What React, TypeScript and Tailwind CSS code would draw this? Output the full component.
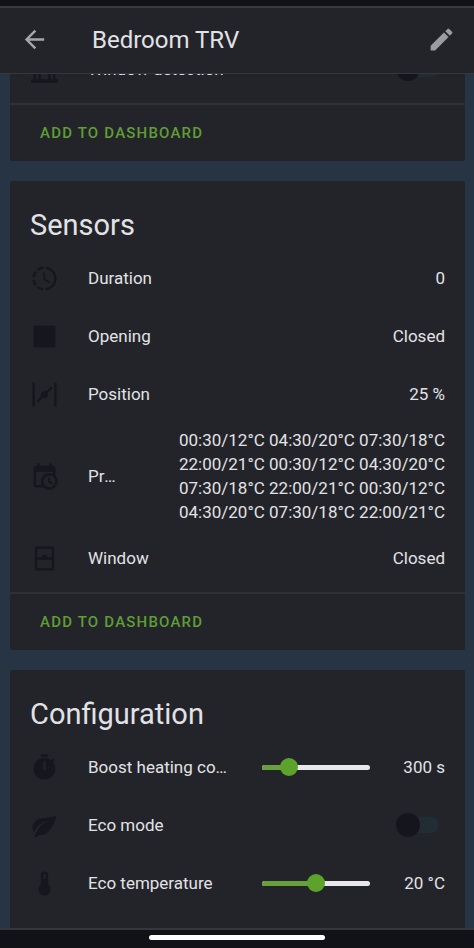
import React, { ReactNode, useState } from "react";
import { MdArrowBack, MdEdit } from "react-icons/md";

const icons = {
  windowOpen: "M21 20V2H3V20H1V23H23V20M19 4V11H17V4M5 4H7V11H5M5 20V13H7V20M9 20V4H15V20M17 20V13H19V20Z",
  progressClock: "M13,2.03V2.05L13,4.05C17.39,4.59 20.5,8.58 19.96,12.97C19.5,16.61 16.64,19.5 13,19.93V21.93C18.5,21.38 22.5,16.5 21.95,11C21.5,6.25 17.73,2.5 13,2.03M11,2.06C9.05,2.25 7.19,3 5.67,4.26L7.1,5.74C8.22,4.84 9.57,4.26 11,4.06V2.06M4.26,5.67C3,7.19 2.25,9.04 2.05,11H4.05C4.24,9.58 4.8,8.23 5.69,7.1L4.26,5.67M2.06,13C2.26,14.96 3.03,16.81 4.27,18.33L5.69,16.9C4.81,15.77 4.24,14.42 4.06,13H2.06M7.1,18.37L5.67,19.74C7.18,21 9.04,21.79 11,22V20C9.58,19.82 8.23,19.25 7.1,18.37M12.5,7V12.25L17,14.92L16.25,16.15L11,13V7H12.5Z",
  square: "M3,3V21H21V3H3Z",
  valve: "M4 22H2V2H4M22 2H20V22H22M17.24 5.34L13.24 9.34A3 3 0 0 0 9.24 13.34L5.24 17.34L6.66 18.76L10.66 14.76A3 3 0 0 0 14.66 10.76L18.66 6.76Z",
  calendarClock: "M15,13H16.5V15.82L18.94,17.23L18.19,18.53L15,16.69V13M19,8H5V19H9.67C9.24,18.09 9,17.07 9,16A7,7 0 0,1 16,9C17.07,9 18.09,9.24 19,9.67V8M5,21C3.89,21 3,20.1 3,19V5C3,3.89 3.89,3 5,3H6V1H8V3H16V1H18V3H19A2,2 0 0,1 21,5V11.1C22.24,12.36 23,14.09 23,16A7,7 0 0,1 16,23C14.09,23 12.36,22.24 11.1,21H5M16,11.15A4.85,4.85 0 0,0 11.15,16C11.15,18.68 13.32,20.85 16,20.85A4.85,4.85 0 0,0 20.85,16C20.85,13.32 18.68,11.15 16,11.15Z",
  windowClosed: "M6,11H10V9H14V11H18V4H6V11M18,13H6V20H18V13M6,2H18A2,2 0 0,1 20,4V20A2,2 0 0,1 18,22H6A2,2 0 0,1 4,20V4A2,2 0 0,1 6,2Z",
  timer: "M19.03 7.39L20.45 5.97C20 5.46 19.55 5 19.04 4.56L17.62 6C16.07 4.74 14.12 4 12 4C7.03 4 3 8.03 3 13S7.03 22 12 22C17 22 21 17.97 21 13C21 10.88 20.26 8.93 19.03 7.39M13 14H11V7H13V14M15 1H9V3H15V1Z",
  leaf: "M17,8C8,10 5.9,16.17 3.82,21.34L5.71,22L6.66,19.7C7.14,19.87 7.64,20 8,20C19,20 22,3 22,3C21,5 14,5.25 9,6.25C4,7.25 2,11.5 2,13.5C2,15.5 3.75,17.25 3.75,17.25C7,8 17,8 17,8Z",
  thermometer: "M15 13V5A3 3 0 0 0 9 5V13A5 5 0 1 0 15 13M12 4A1 1 0 0 1 13 5V8H11V5A1 1 0 0 1 12 4Z",
};

interface rowProps {
  icon: string,
  name: string,
  htmlFor?: string,
  children: ReactNode
}

function EntityRow({ icon, name, htmlFor, children }: rowProps) {
  const nameClass = "min-w-8 grow truncate";

  return (
    <div className="flex min-h-12 items-center">
      <svg className="mr-[29px] h-[29px] w-[29px] shrink-0 fill-[#15161e]" viewBox="0 0 24 24" aria-hidden="true">
        <path d={icon} />
      </svg>
      {htmlFor ? <label className={nameClass} htmlFor={htmlFor}>{name}</label> : <span className={nameClass}>{name}</span>}
      {children}
    </div>
  );
}

function Value({ children }: { children: ReactNode }) {
  return <span className="ml-2 text-right">{children}</span>;
}

interface sliderProps {
  id: string,
  min: number,
  max: number,
  start: number,
  unit: string
}

function SliderControl({ id, min, max, start, unit }: sliderProps) {
  const [value, setValue] = useState(start);

  function handleChange(e: React.ChangeEvent<HTMLInputElement>) {
    setValue(parseInt(e.target.value));
  }

  return (
    <>
      <div className="relative ml-7 h-[5px] w-[108px] shrink-0 rounded-full bg-[#e9e7ed]">
        <div className="h-full rounded-full bg-[#69a03e]" style={{ width: `${((value - min) / (max - min)) * 100}%` }} />
        {/* wider than the track by half a thumb on both sides */}
        <input
          className="absolute -inset-x-[9px] -top-2 h-5 w-[126px] cursor-pointer appearance-none bg-transparent [&::-webkit-slider-thumb]:h-[18px] [&::-webkit-slider-thumb]:w-[18px] [&::-webkit-slider-thumb]:appearance-none [&::-webkit-slider-thumb]:rounded-full [&::-webkit-slider-thumb]:bg-[#5da32b]"
          id={id}
          type="range"
          min={min}
          max={max}
          value={value}
          onChange={handleChange}
        />
      </div>
      <span className="w-[75px] shrink-0 text-right">{value} {unit}</span>
    </>
  );
}

function Toggle({ id }: { id: string }) {
  return (
    <input
      className="relative mr-1.5 h-4 w-9 shrink-0 cursor-pointer appearance-none rounded-full bg-[#222c35] before:absolute before:-left-[7px] before:-top-1 before:h-6 before:w-6 before:rounded-full before:bg-[#14151d] checked:before:left-[19px] checked:before:bg-[#5da32b]"
      id={id}
      type="checkbox"
      role="switch"
    />
  );
}

function Card({ title, action, children }: { title?: string, action?: boolean, children: ReactNode }) {
  return (
    <section className="rounded-xs bg-[#232429]">
      {title && <h2 className="px-5 pt-5 pb-[5px] text-[29px] leading-12">{title}</h2>}
      <div className="space-y-2.5 px-5 pb-2.5">{children}</div>
      {action && (
        <div className="border-t-2 border-[#2f3035] px-2.5 py-2">
          <button className="h-10 cursor-pointer px-5 text-[15px] font-medium tracking-[0.08em] text-[#5f9e35] uppercase">
            Add to dashboard
          </button>
        </div>
      )}
    </section>
  );
}

export default function App() {
  return (
    <div className="flex h-screen flex-col overflow-hidden bg-[#273444] font-[Roboto,sans-serif] text-[17px] leading-6 text-[#e2e2e6]">
      <div className="h-1.5 shrink-0 bg-[#111218]" />
      <header className="flex h-[68px] shrink-0 items-center border-t-2 border-b border-t-[#3a3a3f] border-b-[#36373c] bg-[#232429] pr-[18px] pb-0.5 pl-5">
        <button className="cursor-pointer text-[#a6a6aa]" aria-label="Back">
          <MdArrowBack className="h-[29px] w-[29px]" />
        </button>
        <h1 className="ml-[43px] grow text-2xl">Bedroom TRV</h1>
        <button className="cursor-pointer text-[#9b9ba0]" aria-label="Edit">
          <MdEdit className="h-[29px] w-[29px]" />
        </button>
      </header>

      <main className="min-h-0 grow overflow-hidden">
        {/* list is scrolled a little under the header */}
        <div className="-mt-[29px] flex flex-col gap-5 pr-[9px] pl-2.5">
          <Card action>
            <EntityRow icon={icons.windowOpen} name="Window detection" htmlFor="window_detection">
              <Toggle id="window_detection" />
            </EntityRow>
          </Card>

          <Card title="Sensors" action>
            <EntityRow icon={icons.progressClock} name="Duration"><Value>0</Value></EntityRow>
            <EntityRow icon={icons.square} name="Opening"><Value>Closed</Value></EntityRow>
            <EntityRow icon={icons.valve} name="Position"><Value>25 %</Value></EntityRow>
            <EntityRow icon={icons.calendarClock} name="Program">
              <Value>
                00:30/12°C 04:30/20°C 07:30/18°C 22:00/21°C 00:30/12°C 04:30/20°C 07:30/18°C 22:00/21°C 00:30/12°C 04:30/20°C 07:30/18°C 22:00/21°C
              </Value>
            </EntityRow>
            <EntityRow icon={icons.windowClosed} name="Window"><Value>Closed</Value></EntityRow>
          </Card>

          <Card title="Configuration">
            <EntityRow icon={icons.timer} name="Boost heating countdown" htmlFor="boost_heating">
              <SliderControl id="boost_heating" min={100} max={900} start={300} unit="s" />
            </EntityRow>
            <EntityRow icon={icons.leaf} name="Eco mode" htmlFor="eco_mode">
              <Toggle id="eco_mode" />
            </EntityRow>
            <EntityRow icon={icons.thermometer} name="Eco temperature" htmlFor="eco_temperature">
              <SliderControl id="eco_temperature" min={5} max={35} start={20} unit="°C" />
            </EntityRow>
            <div className="h-12" />
          </Card>
        </div>
      </main>

      <footer className="flex h-5 shrink-0 justify-center border-t-2 border-[#36373c] bg-[#111218] pt-[5px]">
        <div className="h-[5px] w-44 rounded-full bg-white" />
      </footer>
    </div>
  );
}
